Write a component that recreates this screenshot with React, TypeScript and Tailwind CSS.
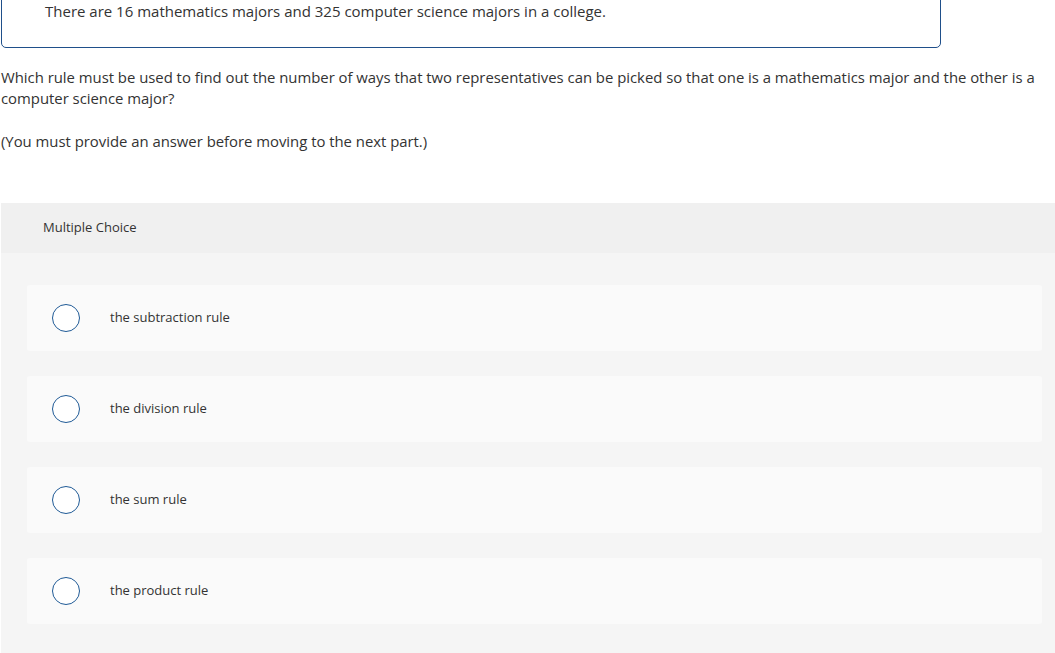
import React from "react";

const options = [
  "the subtraction rule",
  "the division rule",
  "the sum rule",
  "the product rule",
];

export default function App() {
  return (
    <div
      className="w-[1055px] h-[653px] overflow-hidden bg-white text-[#333333]"
      style={{ fontFamily: "'Open Sans', Arial, sans-serif" }}
    >
      <div className="ml-[1px] w-[940px] mt-[-40px] h-[88px] border border-[#1f4f8a] rounded-[5px] pl-[43px] pt-[40px] text-[15px] leading-[21px]">
        <p>There are 16 mathematics majors and 325 computer science majors in a college.</p>
      </div>

      <div className="mt-[19px] pl-[1px] pr-[8px] text-[14.9px] tracking-[-0.02px] leading-[21px]">
        <p>
          Which rule must be used to find out the number of ways that two representatives can be picked so that one is a mathematics major and the other is a computer science major?
        </p>
        <p className="mt-[22px]">(You must provide an answer before moving to the next part.)</p>
      </div>

      <div className="mt-[51px] ml-[1px]">
        <div className="h-[50px] bg-[#f0f0f0] flex items-center pl-[42px] text-[13px]">
          Multiple Choice
        </div>
        <div className="bg-[#f5f5f5] pt-[32px] pb-[30px] pl-[26px] pr-[13px] flex flex-col gap-[25px]">
          {options.map((o) => (
            <div key={o} className="h-[66px] bg-[#fafafa] rounded-[3px] flex items-center">
              <span className="ml-[25px] w-[28px] h-[28px] rounded-full border-[1.5px] border-[#1f5a96] bg-white shrink-0" />
              <span className="ml-[30px] text-[13px]">{o}</span>
            </div>
          ))}
        </div>
      </div>
    </div>
  );
}
